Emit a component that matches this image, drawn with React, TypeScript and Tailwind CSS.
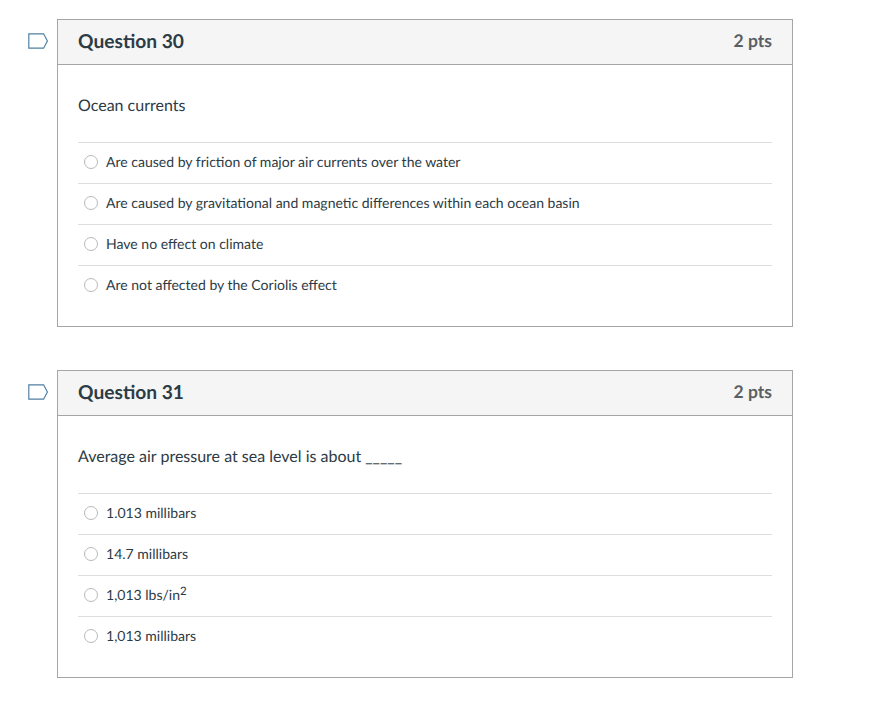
import { ReactNode } from 'react';

interface QuestionProps {
  title: string;
  text: ReactNode;
  answers: ReactNode[];
}

function Flag() {
  return (
    <svg className="absolute left-[-30px] top-[13px]" width="21" height="17" viewBox="0 0 21 17" fill="none">
      <path d="M0.8 0.8H15.6L19.4 8L15.6 15.2H0.8Z" fill="#fff" stroke="#4f81a3" strokeWidth="1.2" />
    </svg>
  );
}

function Question({ title, text, answers }: QuestionProps) {
  return (
    <div className="relative w-[736px] border border-[#a5a5a5] bg-white">
      <Flag />
      <div className="flex h-[45px] items-center justify-between border-b border-[#a5a5a5] bg-[#f5f5f5] px-5 pb-[2px]">
        <span className="pt-[2px] text-[19.2px] font-bold text-[#2d3b45]">{title}</span>
        <span className="text-[17.5px] font-bold text-[#5a5f63]">2 pts</span>
      </div>
      <div className="px-5 pb-5">
        <p className="flex h-[77px] items-center pt-[5px] text-[16px] text-[#2d3b45]">{text}</p>
        {answers.map((answer, i) => (
          <div key={i} className="flex h-[41px] items-center border-t border-[#dcdee0] pb-[2px] pl-[6px] text-[14.03px] text-[#2d3b45]">
            <span className="mr-[8px] h-[14px] w-[14px] shrink-0 rounded-full border-[1.5px] border-[#b8b9ba] bg-white" />
            <span className="pb-[1px]">{answer}</span>
          </div>
        ))}
      </div>
    </div>
  );
}

export default function App() {
  return (
    <div className="flex min-h-[701px] flex-col gap-[43px] bg-white pl-[57px] pt-[19px] font-['Lato',sans-serif] [text-rendering:geometricPrecision]">
      <Question
        title="Question 30"
        text="Ocean currents"
        answers={[
          'Are caused by friction of major air currents over the water',
          'Are caused by gravitational and magnetic differences within each ocean basin',
          'Have no effect on climate',
          'Are not affected by the Coriolis effect',
        ]}
      />
      <Question
        title="Question 31"
        text="Average air pressure at sea level is about _____"
        answers={[
          '1.013 millibars',
          '14.7 millibars',
          <span>
            1,013 lbs/in<sup className="top-[-5px] text-[11.5px]">2</sup>
          </span>,
          '1,013 millibars',
        ]}
      />
    </div>
  );
}
